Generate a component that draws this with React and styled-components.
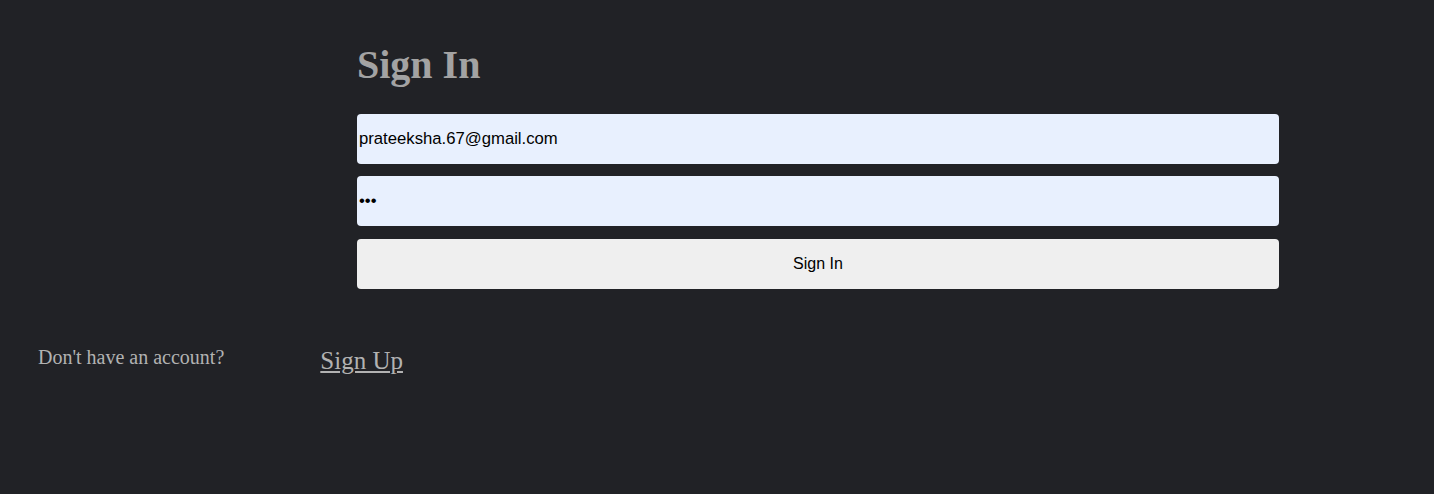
import React from "react";
import styled, { createGlobalStyle } from "styled-components";

const Global = createGlobalStyle`
  html, body { margin: 0; padding: 0; background: #212226; }
  body { font-family: "Liberation Serif", "Times New Roman", serif; min-height: 494px; }
`;

const Page = styled.div`
  display: flex;
  flex-direction: column;
  padding-top: 42px;
`;

const FormColumn = styled.form`
  display: flex;
  flex-direction: column;
  width: 922px;
  margin-left: 357px;
`;

const Title = styled.h1`
  margin: 0 0 26px 0;
  font-family: "Liberation Serif", "Times New Roman", serif;
  font-weight: bold;
  font-size: 40px;
  line-height: 46px;
  color: #a3a3a3;
`;

const Field = styled.input`
  box-sizing: border-box;
  height: 50px;
  width: 100%;
  border: none;
  border-radius: 4px;
  background: #e8f0fe;
  padding: 0 2px;
  margin-bottom: ${(p) => p.$gap}px;
  font-family: "Liberation Sans", Arial, sans-serif;
  font-size: 16.7px;
  color: #000;
  outline: none;
`;

const Button = styled.button`
  box-sizing: border-box;
  height: 50px;
  width: 100%;
  border: none;
  border-radius: 4px;
  background: #efefef;
  font-family: "Liberation Sans", Arial, sans-serif;
  font-size: 16px;
  color: #000;
  cursor: pointer;
`;

const Footer = styled.div`
  display: flex;
  align-items: flex-start;
  margin-top: 57px;
  padding-left: 38px;
  gap: 96px;
`;

const Prompt = styled.span`
  font-size: 20px;
  line-height: 23px;
  color: #b2b2b2;
`;

const SignUpLink = styled.a`
  font-size: 25px;
  line-height: 29px;
  color: #b2b2b2;
  text-decoration: underline;
`;

export default function App() {
  return (
    <>
      <Global />
      <Page>
        <FormColumn onSubmit={(e) => e.preventDefault()}>
          <Title>Sign In</Title>
          <Field type="email" defaultValue="prateeksha.67@gmail.com" $gap={12} />
          <Field type="password" defaultValue="abc" $gap={13} />
          <Button type="submit">Sign In</Button>
        </FormColumn>
        <Footer>
          <Prompt>Don't have an account?</Prompt>
          <SignUpLink href="#">Sign Up</SignUpLink>
        </Footer>
      </Page>
    </>
  );
}
